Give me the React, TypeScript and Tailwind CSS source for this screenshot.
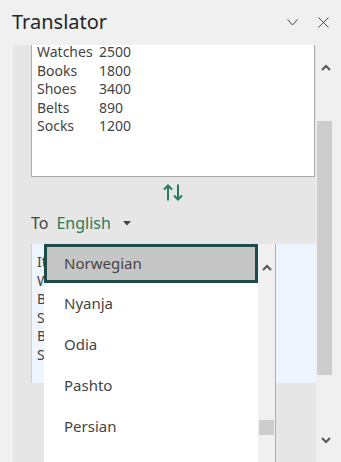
import React from 'react';

const rows: [string, string][] = [
    ['Watches', '2500'],
    ['Books', '1800'],
    ['Shoes', '3400'],
    ['Belts', '890'],
    ['Socks', '1200'],
];

const translated = ['Items', 'Watches', 'Books', 'Shoes', 'Belts', 'Socks'];

const languages = ['Norwegian', 'Nyanja', 'Odia', 'Pashto', 'Persian'];

const font = {fontFamily: '"Noto Sans", "Open Sans", sans-serif'};

// small chevron used in both scrollbars
const Chevron = ({up}: {up?: boolean}) => (
    <svg width="10" height="7" viewBox="0 0 10 7">
        <path d={up ? 'M1 6 L5 2 L9 6' : 'M1 1 L5 5 L9 1'} fill="none" stroke="#555" strokeWidth="2"/>
    </svg>
);

const App: React.FC = () => {
    return (
        <div className="w-[341px] h-[462px] bg-[#f0f0f0] overflow-hidden flex flex-col text-[#333]" style={font}>
            {/* 헤더 */}
            <div className="h-[45px] flex items-center pl-[12px] pr-[12px] shrink-0">
                <span className="text-[20px] text-[#262626] leading-none -mt-[1px]">Translator</span>
                <div className="ml-auto flex items-center gap-[20px]">
                    <svg width="11" height="7" viewBox="0 0 11 7">
                        <path d="M0.5 0.5 L5.5 6 L10.5 0.5" fill="none" stroke="#444" strokeWidth="1"/>
                    </svg>
                    <svg width="11" height="11" viewBox="0 0 11 11">
                        <path d="M0.5 0.5 L10.5 10.5 M10.5 0.5 L0.5 10.5" fill="none" stroke="#444" strokeWidth="1"/>
                    </svg>
                </div>
            </div>

            <div className="flex flex-1 min-h-0">
                {/* 본문 패널 */}
                <div className="relative ml-[13px] w-[303px] bg-[#e6e6e6] flex flex-col">
                    <div className="ml-[18px] w-[284px] h-[132px] bg-white border border-t-0 border-[#ababab] pl-[5px] text-[14px] leading-[18.5px] text-[#444]">
                        <div className="-mt-[2px]">
                            {rows.map(([name, qty]) => (
                                <div key={name} className="flex">
                                    <span className="w-[62px]">{name}</span>
                                    <span>{qty}</span>
                                </div>
                            ))}
                        </div>
                    </div>

                    <div className="ml-[18px] w-[284px] flex justify-center pt-[7px] h-[31px]">
                        <svg width="20" height="17" viewBox="0 0 20 17">
                            <path d="M5 16.5 V1.5 M1 5.5 L5 1.5 L9 5.5" fill="none" stroke="#2a7a5c" strokeWidth="2"/>
                            <path d="M15 0.5 V15.5 M11 11.5 L15 15.5 L19 11.5" fill="none" stroke="#2a7a5c" strokeWidth="2"/>
                        </svg>
                    </div>

                    <div className="ml-[18px] flex items-center h-[36px] pb-[6px] text-[16px]">
                        <span className="text-[#444]">To</span>
                        <span className="ml-[8px] text-[#2a7a5c]">English</span>
                        <svg className="ml-[12px]" width="8" height="5" viewBox="0 0 8 5">
                            <path d="M0 0 H8 L4 4.5 Z" fill="#444"/>
                        </svg>
                    </div>

                    <div className="ml-[18px] w-[285px] h-[139px] bg-[#eef5fe] border-l border-[#c8d0d8] pl-[5px] pt-[9px] text-[14px] leading-[18.5px] text-[#444]">
                        {translated.map(t => (
                            <div key={t}>{t}</div>
                        ))}
                    </div>

                    {/* 언어 드롭다운 */}
                    <div className="absolute left-[31px] top-[199px] w-[232px] h-[240px] bg-white border-r border-[#9fb2c2] flex">
                        <div className="w-[214px] flex flex-col text-[15px] text-[#444]">
                            {languages.map((lang, i) => (
                                <div
                                    key={lang}
                                    className={i === 0
                                        ? 'h-[39px] shrink-0 flex items-center pl-[17px] bg-[#c6c6c6] border-[3px] border-[#1d4b4b]'
                                        : 'h-[41px] shrink-0 flex items-center pl-[20px]'}
                                >
                                    {lang}
                                </div>
                            ))}
                        </div>
                        <div className="w-[17px] bg-[#f0f0f0] flex flex-col items-center">
                            <div className="mt-[20px]"><Chevron up/></div>
                            <div className="mt-[149px] w-[15px] h-[15px] bg-[#cdcdcd]"/>
                        </div>
                    </div>
                </div>

                {/* 스크롤바 */}
                <div className="w-[25px] flex flex-col">
                    <div className="pl-[5px] mt-[19px]"><Chevron up/></div>
                    <div className="ml-[1px] mt-[50px] w-[15px] h-[254px] bg-[#cdcdcd]"/>
                    <div className="pl-[5px] mt-[62px]"><Chevron/></div>
                </div>
            </div>
        </div>
    );
};

export default App;
